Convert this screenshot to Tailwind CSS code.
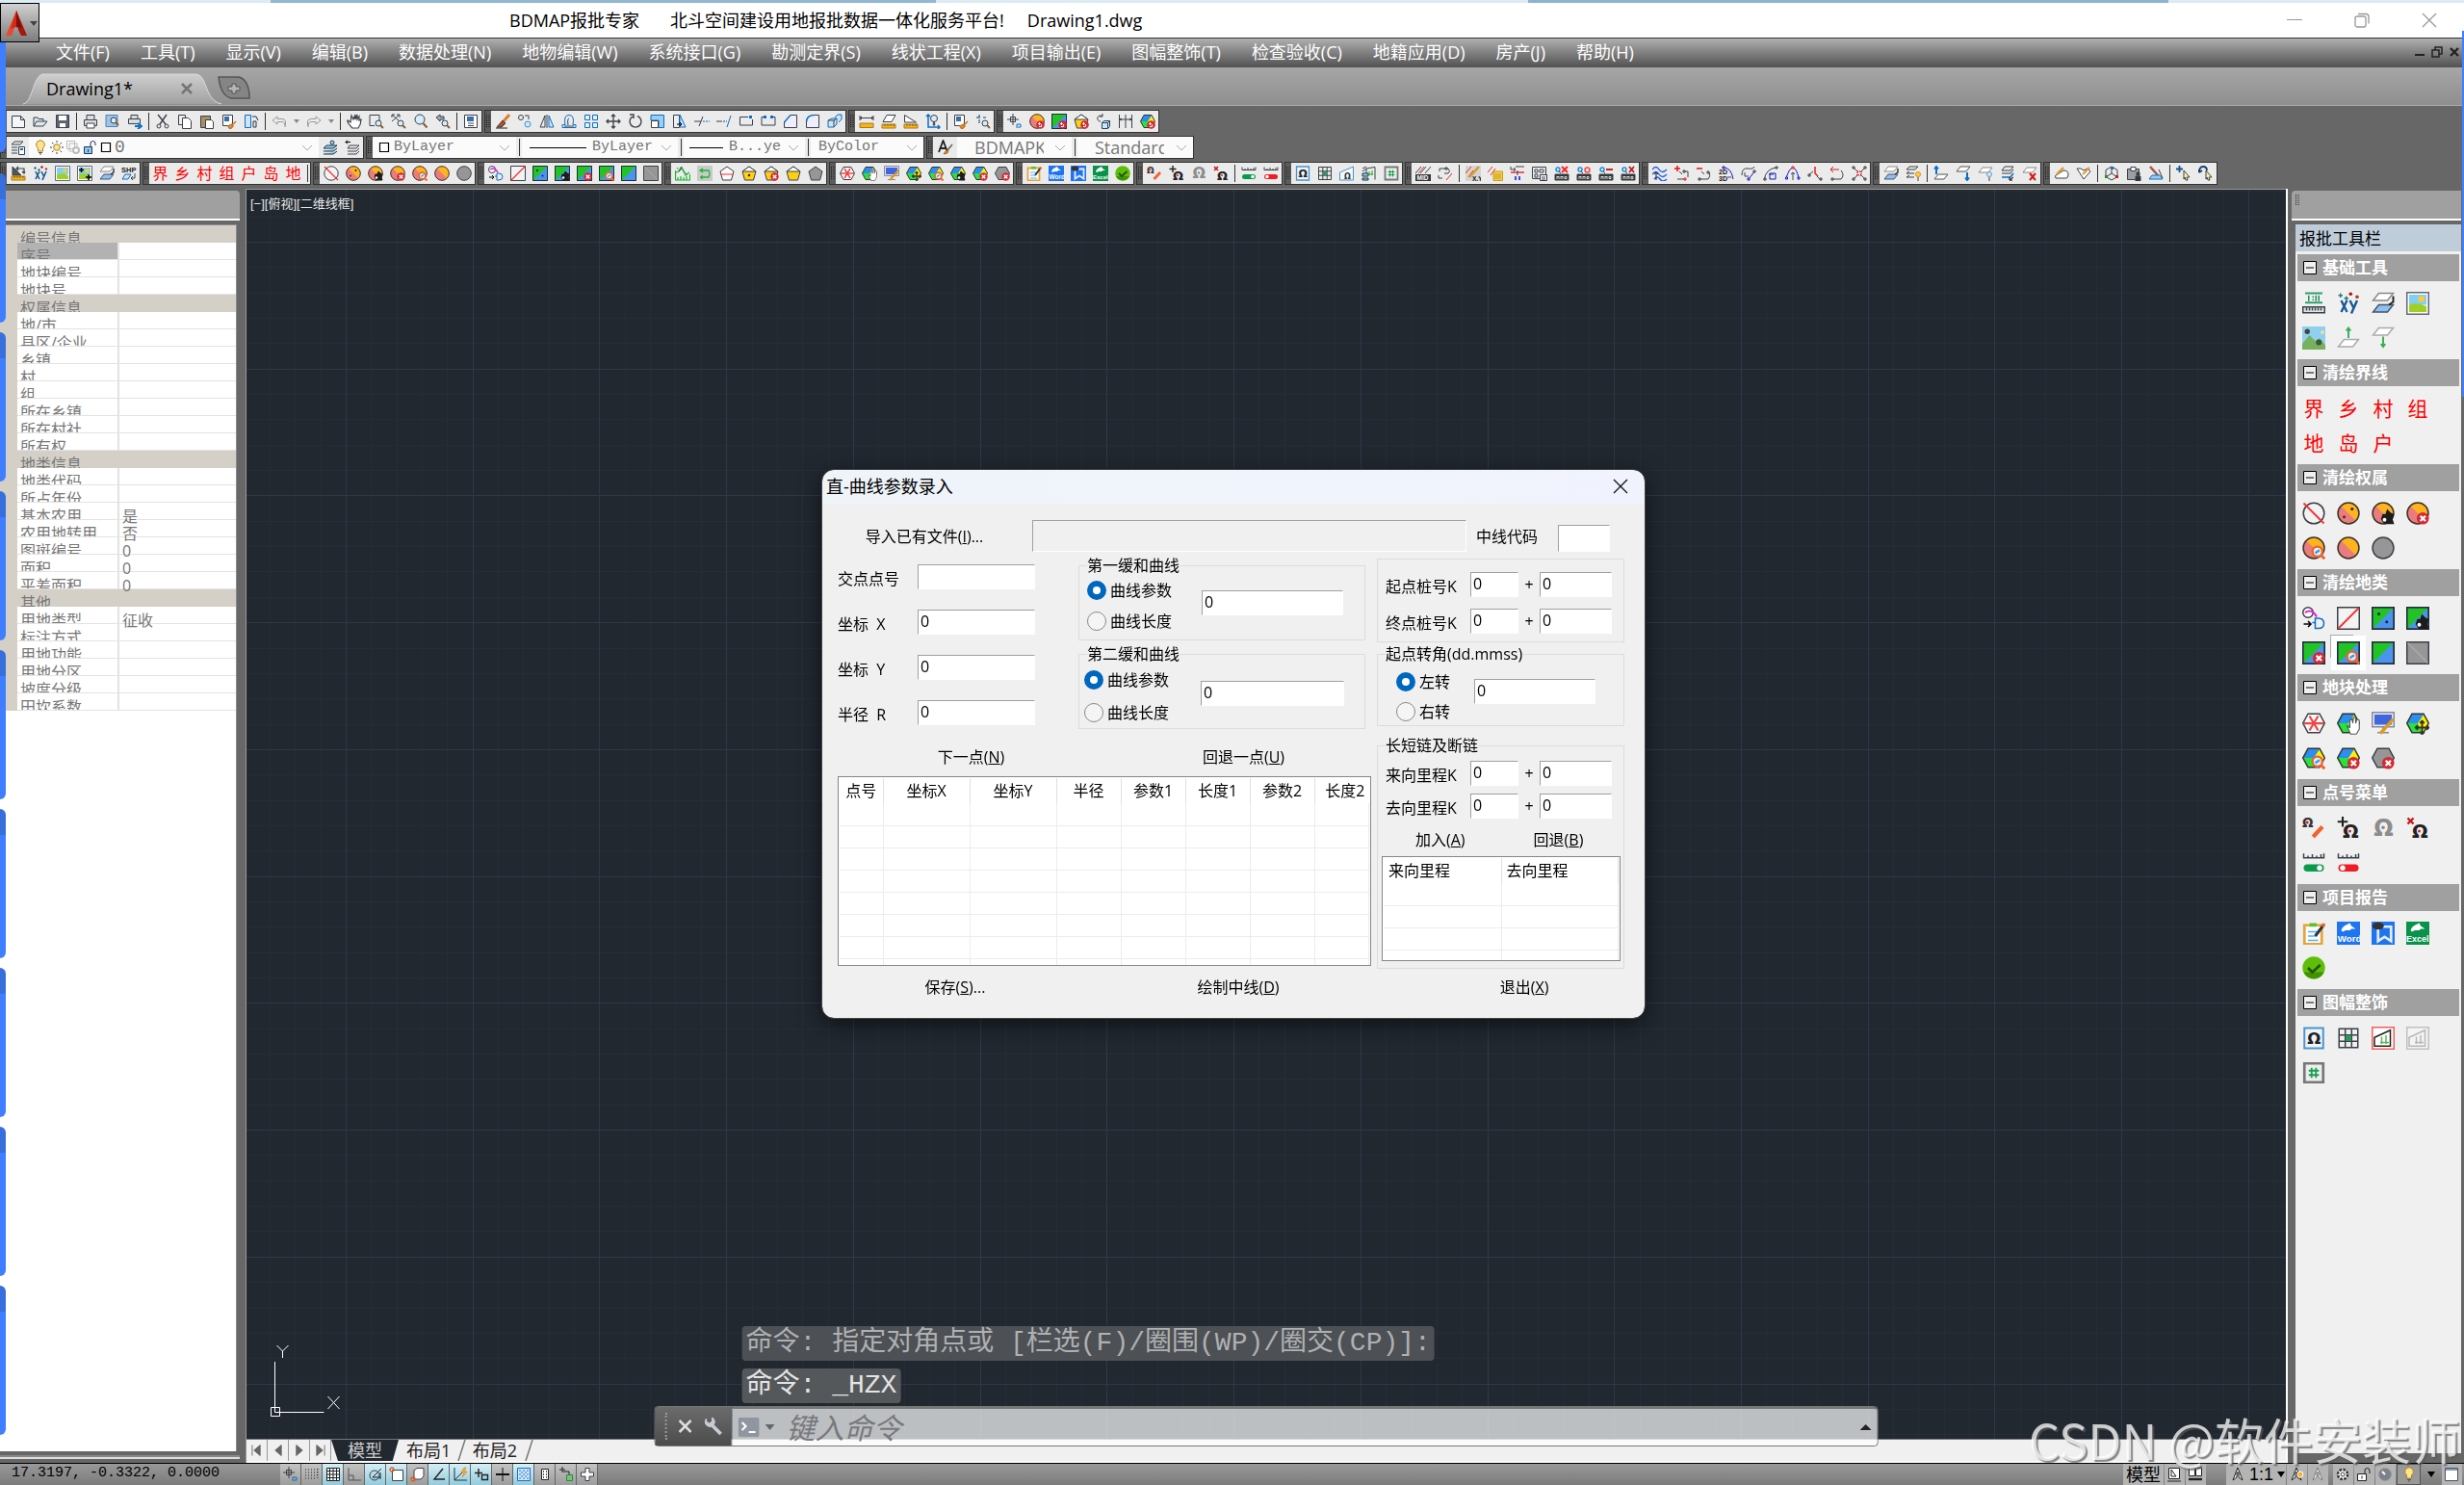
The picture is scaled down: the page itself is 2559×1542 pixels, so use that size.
<!DOCTYPE html>
<html lang="zh-CN">
  <head>
    <meta charset="UTF-8" />
    <meta name="viewport" content="width=device-width, initial-scale=1.0" />
    <title>BDMAP报批专家</title>
    <script src="https://cdn.jsdelivr.net/npm/@tailwindcss/browser@4"></script>
  </head>
  <body class="flex h-screen flex-col overflow-hidden bg-[#676767] font-['Open_Sans','Noto_Sans_CJK_SC',sans-serif] text-black">
    <!-- desktop strip above the window -->
    <div class="flex h-[3px] shrink-0 bg-[#dcebf4]">
      <div class="w-[11%]"></div>
      <div class="w-[27%] bg-[#93b7d2]"></div>
      <div class="w-[24%]"></div>
      <div class="w-[26%] bg-[#8fb3cf]"></div>
    </div>

    <!-- title bar -->
    <header class="flex h-[37px] shrink-0 items-center border-b border-[#333] bg-white pr-7 pl-[529px] text-lg">
      <h1 class="flex flex-1 gap-8 leading-6"><span>BDMAP报批专家</span><span>北斗空间建设用地报批数据一体化服务平台!</span><span class="-ml-2">Drawing1.dwg</span></h1>
      <div class="flex gap-[54px]">
        <button aria-label="最小化"><svg class="size-4" viewBox="0 0 16 16" fill="none" stroke="#999"><path d="M0 7.500h16" /></svg></button>
        <button aria-label="还原"><svg class="size-4" viewBox="0 0 16 16" fill="none" stroke="#999" stroke-width="1.300"><rect x="1" y="4" width="11" height="11" rx="2" /><path d="M4 1.500h8q3 0 3 3v7" /></svg></button>
        <button aria-label="关闭"><svg class="size-4" viewBox="0 0 16 16" fill="none" stroke="#999" stroke-width="1.300"><path d="M1 1l14 14M15 1L1 15" /></svg></button>
      </div>
    </header>
    <button aria-label="应用程序菜单" class="absolute top-[3px] left-0 z-10 flex h-[41px] w-[41px] items-center border border-black bg-linear-to-b from-[#d2d2d2] to-[#7d7d7d] pl-1">
      <svg class="h-7 w-6" viewBox="0 0 24 28"><path d="M12 1L1 27h6l2-5z" fill="#e8492f" /><path d="M12 1l11 26h-6l-3-6z" fill="#a8160c" /><path d="M12 1L6 20l6-2 6 2z" fill="#d32a18" /><path d="M12 1v17l6 2z" fill="#7d0f08" /></svg>
      <svg class="ml-0.5 h-2 w-2" viewBox="0 0 8 8"><path d="M0 2h8L4 7z" fill="#3c434c" /></svg>
    </button>

    <!-- menu bar -->
    <nav class="flex h-[30px] shrink-0 items-center bg-linear-to-b from-[#b0b0b0] to-[#525252] pr-1 pb-0.5 pl-[58px] text-lg text-white">
      <div id="menu" class="flex flex-1 gap-8"></div>
      <div class="flex gap-1.5">
        <button aria-label="最小化图形"><svg class="h-3 w-3" viewBox="0 0 12 12" fill="none" stroke="#222" stroke-width="2"><path d="M1 9h10" /></svg></button>
        <button aria-label="还原图形"><svg class="h-3 w-3" viewBox="0 0 12 12" fill="none" stroke="#222" stroke-width="1.500"><path d="M1 4h7v7H1zM4 4V1h7v7H8" /></svg></button>
        <button aria-label="关闭图形"><svg class="h-3 w-3" viewBox="0 0 12 12" fill="none" stroke="#222" stroke-width="2.400"><path d="M2 2l8 8M10 2l-8 8" /></svg></button>
      </div>
    </nav>

    <!-- drawing tabs -->
    <div class="flex h-10 shrink-0 items-end border-b border-[#aaa] bg-linear-to-b from-[#a6a6a6] to-[#8f8f8f] pl-6">
      <div class="relative flex h-[33px] w-[206px] items-center pr-[30px] pb-0.5 pl-6">
        <svg class="absolute inset-0 h-full w-full" viewBox="0 0 206 33" preserveAspectRatio="none">
          <defs><linearGradient id="tab" x1="0" y1="0" x2="0" y2="1"><stop offset="0" stop-color="#cfcfcf" /><stop offset="1" stop-color="#a0a0a0" /></linearGradient></defs>
          <path d="M0 32C10 30 10 4 20 1H180C192 3 188 28 206 32" fill="url(#tab)" stroke="#dadada" />
        </svg>
        <span class="relative flex-1 text-lg leading-6">Drawing1*</span>
        <button aria-label="关闭标签" class="relative"><svg class="size-3" viewBox="0 0 12 12" stroke="#747474" stroke-width="2.500"><path d="M1 1l10 10M11 1L1 11" /></svg></button>
      </div>
      <button aria-label="新建标签" class="-ml-1 pb-1.5"><svg class="h-6 w-[34px]" viewBox="0 0 34 24"><path d="M1 1H22Q33 4 33 23H14Q3 20 1 1z" fill="#858585" stroke="#555" stroke-width="1.500" /><path d="M15 8h4v3h4v4h-4v3h-4v-3h-4v-4h4z" fill="#b5b5b5" stroke="#555" /></svg></button>
    </div>

    <!-- toolbars -->
    <div class="flex h-[86px] shrink-0 flex-col gap-[3px] pt-1">
      <div data-row="0" class="flex h-6 gap-0.5"></div>
      <div class="flex h-6 gap-0.5">
        <div class="flex h-6 w-[378px] items-center border border-[#333] bg-[#ebebeb]">
          <i data-grip></i>
          <button data-icon="layerProps" class="flex w-[23px] justify-center" aria-label="图层特性"></button>
          <div class="relative flex h-full flex-1 items-center gap-px bg-[#fbfbfb] pl-1 text-[#777]">
            <i data-icon="bulb"></i><i data-icon="sun"></i><i data-icon="freeze"></i><i data-icon="lock"></i><i data-icon="box"></i>
            <select aria-label="图层" class="h-full flex-1 appearance-none bg-transparent font-['Liberation_Mono',monospace] text-lg leading-5 outline-none"><option>0</option></select>
            <i data-chev></i>
          </div>
          <button data-icon="layerCur" class="flex w-[23px] justify-center" aria-label="置为当前"></button>
          <button data-icon="layerPrev" class="flex w-[23px] justify-center" aria-label="上一个图层"></button>
        </div>
        <div class="flex h-6 w-[580px] items-center border border-[#333] bg-[#ebebeb] font-['Liberation_Mono',monospace] text-[15px] text-[#777]">
          <i data-grip></i>
          <div class="relative flex h-full w-[149px] items-center gap-0.5 bg-[#fbfbfb] pl-1">
            <i data-icon="box"></i>
            <select aria-label="颜色" class="h-full flex-1 appearance-none bg-transparent outline-none"><option>ByLayer</option></select><i data-chev></i>
          </div>
          <i data-sep></i>
          <div class="relative flex h-full w-[162px] items-center gap-1.5 bg-[#fbfbfb] pl-2">
            <span class="h-px w-[59px] bg-black"></span>
            <select aria-label="线型" class="h-full flex-1 appearance-none bg-transparent outline-none"><option>ByLayer</option></select><i data-chev></i>
          </div>
          <i data-sep></i>
          <div class="relative flex h-full w-[126px] items-center gap-1.5 bg-[#fbfbfb] pl-1.5">
            <span class="h-px w-[35px] bg-black"></span>
            <select aria-label="线宽" class="h-full flex-1 appearance-none bg-transparent outline-none"><option>B...ye</option></select><i data-chev></i>
          </div>
          <i data-sep></i>
          <div class="relative flex h-full flex-1 items-center bg-[#fbfbfb] pl-2">
            <select aria-label="打印样式" class="h-full flex-1 appearance-none bg-transparent outline-none"><option>ByColor</option></select><i data-chev></i>
          </div>
        </div>
        <div class="flex h-6 w-[278px] items-center border border-[#333] bg-[#ebebeb] text-lg text-[#777]">
          <i data-grip></i>
          <button data-icon="textStyle" class="flex w-[25px] justify-center" aria-label="文字样式"></button>
          <div class="relative flex h-full w-[119px] items-center bg-[#fbfbfb] pl-[18px]">
            <select aria-label="字体样式" class="h-full w-[72px] appearance-none overflow-hidden bg-transparent leading-5 outline-none"><option>BDMAPK</option></select><i data-chev></i>
          </div>
          <i data-sep></i>
          <div class="relative flex h-full flex-1 items-center bg-[#fbfbfb] pl-[18px]">
            <select aria-label="标注样式" class="h-full w-[72px] appearance-none overflow-hidden bg-transparent leading-5 outline-none"><option>Standard</option></select><i data-chev></i>
          </div>
        </div>
      </div>
      <div data-row="1" class="flex h-6 gap-0.5"></div>
    </div>

    <main class="flex min-h-0 flex-1">
      <!-- property palette -->
      <aside class="flex w-[255px] shrink-0 flex-col pt-0.5 pr-1.5">
        <div class="h-[31px] rounded-tr border-b-2 border-white bg-[#a0a0a0]"></div>
        <div class="mt-1 mr-[3px] flex min-h-0 flex-1 flex-col border-t border-r border-[#8a8a92] bg-white">
          <table class="w-full table-fixed border-collapse bg-white text-base leading-4 text-[#777]">
            <colgroup><col class="w-[18px]" /><col class="w-[105px]" /><col /></colgroup>
            <tbody id="props"></tbody>
          </table>
        </div>
        <div class="mt-1 mb-1 h-1 border-b-2 border-[#ddd] bg-[#888]"></div>
      </aside>

      <!-- drawing area -->
      <section class="relative flex min-w-0 flex-1 flex-col border-r-2 border-l border-white border-l-[#999] bg-[#f0f0f0]">
        <div id="canvas" class="relative min-h-0 flex-1 overflow-hidden border-t border-[#999] bg-[#212830]">
          <svg id="grid" class="absolute inset-0 h-full w-full"></svg>
          <p class="relative pt-1.5 pl-1 font-['Liberation_Sans','Noto_Sans_CJK_SC',sans-serif] text-[13px] leading-[18px] text-[#e8e8e8]">[−][俯视][二维线框]</p>
          <svg class="absolute bottom-[18px] left-[23px] h-[80px] w-[80px]" viewBox="0 0 80 80" fill="none" stroke="#fff">
            <path d="M6.500 3v52.500h51M2.500 50.500h9v9h-9z" transform="translate(0 15)" /><path d="M8.500 1l6 6 6-6M14.500 7v7" /><path d="M61.500 54l12 13M73.500 54l-12 13" />
          </svg>
        </div>
        <!-- layout tabs -->
        <div class="flex h-[23px] shrink-0 items-stretch border-t border-[#777] text-lg leading-[22px] text-[#222]">
          <div id="pager" class="flex"></div>
          <button class="w-[70px] bg-[#212830] text-[#ccc] [clip-path:polygon(0_0,100%_0,91%_100%,10%_100%)]">模型</button>
          <button class="w-[60px] pl-2 text-left">布局1</button>
          <svg class="h-full w-2.5" viewBox="0 0 10 22" stroke="#777" stroke-width="1.500"><path d="M9 0L2 22" /></svg>
          <button class="w-[60px] text-center">布局2</button>
          <svg class="h-full w-2.5" viewBox="0 0 10 22" stroke="#777" stroke-width="1.500"><path d="M9 0L2 22" /></svg>
        </div>
        <div class="h-0.5 shrink-0 bg-[#fafafa]"></div>

        <!-- command line -->
        <div class="absolute bottom-[17px] left-1/2 flex w-[60%] -translate-x-1/2 flex-col gap-[3px]">
          <div class="flex flex-col items-start gap-2 pl-[91px] font-['Liberation_Mono','Noto_Sans_CJK_SC',monospace] text-[28px] leading-9">
            <p class="rounded-sm bg-[#4d5054] px-1 text-[#aeb0b2]">命令: 指定对角点或 [栏选(F)/圈围(WP)/圈交(CP)]:</p>
            <p class="rounded-sm bg-[#55585b] px-1 text-[#e4e4e4]">命令: _HZX</p>
          </div>
          <div class="flex h-[42px] rounded border border-[#777]">
            <div class="flex w-20 items-center gap-3 border-r border-[#888] bg-linear-to-b from-[#6c6c6c] to-[#4c4c4c] pl-2.5">
              <span class="h-7 border-l-2 border-dotted border-[#999]"></span>
              <button aria-label="关闭命令行"><svg class="h-3.5 w-3.5" viewBox="0 0 14 14" stroke="#ddd" stroke-width="2.500"><path d="M1 1l12 12M13 1L1 13" /></svg></button>
              <button aria-label="自定义"><svg class="size-5" viewBox="0 0 20 20" fill="none" stroke="#c8ccd4"><path d="M9 9l9 9" stroke-width="3.600" /><path d="M3 2a5 5 0 1 0 6-1v4l-3 2-3-2z" fill="#c8ccd4" /></svg></button>
            </div>
            <div class="flex flex-1 items-center rounded-r border-t-2 border-[#777] bg-white/70 pr-1.5 pl-1.5">
              <svg class="h-5 w-[22px]" viewBox="0 0 22 20"><rect width="22" height="20" rx="2" fill="#8f969f" /><path d="M4 5l4 4-4 4M11 15h7" fill="none" stroke="#fff" stroke-width="2" /></svg>
              <svg class="mx-1.5 h-2 w-2.5" viewBox="0 0 10 8"><path d="M0 1h10L5 7z" fill="#666" /></svg>
              <input aria-label="命令" placeholder="键入命令" class="h-full min-w-0 flex-1 bg-transparent pl-1.5 text-[30px] italic outline-none placeholder:text-[#77797c]" />
              <svg class="h-1.5 w-3" viewBox="0 0 12 6"><path d="M0 6h12L6 0z" fill="#222" /></svg>
            </div>
          </div>
        </div>
      </section>

      <!-- approval tool palette -->
      <aside class="flex w-[183px] shrink-0 flex-col pt-0.5 pr-[3px] pb-2.5 pl-1">
        <div class="h-[31px] rounded-tl border-b-2 border-white bg-[#a0a0a0] pt-1 pl-1"><i data-dots></i></div>
        <div class="mt-1 ml-1 flex-1 bg-[#f0f0f0]">
          <h2 class="mb-[3px] h-7 bg-[#bfcddb] pt-px pl-1 text-[17px] leading-7">报批工具栏</h2>
          <div id="palette" class="px-0.5"></div>
        </div>
      </aside>
    </main>

    <!-- status bar -->
    <footer class="flex h-[23px] shrink-0 border-t border-black bg-linear-to-b from-[#999] to-[#7b7b7b]">
      <p class="w-[291px] pl-3 font-['Liberation_Mono',monospace] text-[15px] leading-5 whitespace-pre">17.3197, -0.3322, 0.0000</p>
      <div id="modes" class="flex flex-1"></div>
      <div class="flex gap-px text-lg leading-5">
        <button class="bg-[#b4b4b4] px-[3px]">模型</button>
        <button data-icon="paper" class="w-[21px] bg-[#b4b4b4] pl-0.5" aria-label="快速查看布局"></button>
        <button data-icon="views" class="mr-5 w-[21px] bg-[#b4b4b4] pl-0.5" aria-label="快速查看图形"></button>
        <button class="flex w-[62px] items-center gap-1 bg-[#b4b4b4] pl-1 font-['Liberation_Sans',sans-serif]"><i data-icon="anno"></i>1:1<svg class="h-1.5 w-2" viewBox="0 0 8 6"><path d="M0 0h8L4 6z" /></svg></button>
        <button data-icon="annoSun" class="w-[21px] bg-[#b4b4b4] pl-0.5" aria-label="注释可见性"></button>
        <button data-icon="annoGray" class="mr-1 w-[21px] bg-[#b4b4b4] pl-0.5" aria-label="自动缩放"></button>
        <button data-icon="gear" class="w-[21px] bg-[#b4b4b4] pl-0.5" aria-label="工作空间"></button>
        <button data-icon="lockOpen" class="w-[21px] bg-[#b4b4b4] pl-0.5" aria-label="锁定"></button>
        <button data-icon="gauge" class="w-[21px] bg-[#b4b4b4] pl-0.5" aria-label="硬件加速"></button>
        <button data-icon="bulb" class="w-[25px] border border-[#555] bg-[#999] pl-1" aria-label="隔离对象"></button>
        <svg class="mx-1.5 mt-2 h-1.5 w-2" viewBox="0 0 8 6"><path d="M0 0h8L4 6z" /></svg>
        <button data-icon="screen" class="mr-0.5 w-[21px] bg-[#b4b4b4] pl-0.5" aria-label="全屏显示"></button>
      </div>
    </footer>

    <!-- window peeking out on both sides -->
    <div class="pointer-events-none absolute top-[3px] left-0 flex h-[1490px] w-1.5 flex-col overflow-hidden" id="edge"></div>
    <div class="pointer-events-none absolute top-8 right-0 h-[380px] w-0.5 bg-[#3f7fff]"></div>

    <!-- curve parameter dialog -->
    <div class="pointer-events-none fixed inset-0 grid place-items-center pt-[3px] pl-[3px]">
      <form role="dialog" aria-label="直-曲线参数录入" onsubmit="return false" class="pointer-events-auto flex w-[854px] flex-col overflow-hidden rounded-xl bg-[#f0f0f0] pb-[22px] text-base leading-5 shadow-[0_6px_24px_rgba(0,0,0,0.6)] outline outline-[#444]">
        <div class="flex h-[35px] items-center justify-between bg-linear-to-r from-[#eff4f9] to-[#f0f3fd] pr-[17px] pb-0.5 pl-1 text-lg">
          <h2>直-曲线参数录入</h2>
          <button aria-label="关闭"><svg class="size-4" viewBox="0 0 16 16" fill="none" stroke="#111" stroke-width="1.300"><path d="M1 1l14 14M15 1L1 15" /></svg></button>
        </div>
        <div class="flex h-[50px] items-end pr-9 pl-4">
          <button class="mr-[22px] mb-1.5 w-[180px]">导入已有文件(<u>I</u>)...</button>
          <input aria-label="文件路径" class="h-[33px] min-w-0 flex-1 border border-white border-t-[#a0a0a0] border-l-[#a0a0a0] px-1 outline-none" />
          <label for="code" class="mb-1.5 ml-2.5">中线代码</label>
          <input id="code" class="ml-[21px] h-7 w-[54px] border border-white border-t-[#a0a0a0] border-l-[#a0a0a0] bg-white px-1 outline-none" />
        </div>
        <div class="mt-1 flex gap-1.5 pr-[21px] pl-4">
          <div class="w-[554px]">
            <div class="flex gap-[45px]">
              <div id="coords" class="flex w-[205px] flex-col gap-[21px] pt-[9px]"></div>
              <div class="flex w-[298px] flex-col gap-1">
                <fieldset class="flex h-[88px] border border-[#dcdcdc] pl-2">
                  <legend>第一缓和曲线</legend>
                  <div class="flex w-[119px] flex-col gap-3 pt-1.5">
                    <label class="flex items-center gap-1"><input type="radio" name="c1" checked class="size-5 appearance-none rounded-full border border-[#888] bg-[#f5f5f5] checked:border-[6px] checked:border-[#0067c0] checked:bg-white" />曲线参数</label>
                    <label class="flex items-center gap-1"><input type="radio" name="c1" class="size-5 appearance-none rounded-full border border-[#888] bg-[#f5f5f5] checked:border-[6px] checked:border-[#0067c0] checked:bg-white" />曲线长度</label>
                  </div>
                  <input aria-label="第一缓和曲线值" value="0" class="mt-4 h-[26px] w-[147px] border border-white border-t-[#a0a0a0] border-l-[#a0a0a0] bg-white px-0.5 pb-0.5 outline-none" />
                </fieldset>
                <fieldset class="flex h-[88px] border border-[#dcdcdc] pl-[5px]">
                  <legend class="ml-[3px]">第二缓和曲线</legend>
                  <div class="flex w-[121px] flex-col gap-3.5 pt-[7px]">
                    <label class="flex items-center gap-1"><input type="radio" name="c2" checked class="size-5 appearance-none rounded-full border border-[#888] bg-[#f5f5f5] checked:border-[6px] checked:border-[#0067c0] checked:bg-white" />曲线参数</label>
                    <label class="flex items-center gap-1"><input type="radio" name="c2" class="size-5 appearance-none rounded-full border border-[#888] bg-[#f5f5f5] checked:border-[6px] checked:border-[#0067c0] checked:bg-white" />曲线长度</label>
                  </div>
                  <input aria-label="第二缓和曲线值" value="0" class="mt-[18px] h-[26px] w-[149px] border border-white border-t-[#a0a0a0] border-l-[#a0a0a0] bg-white px-0.5 pb-0.5 outline-none" />
                </fieldset>
              </div>
            </div>
            <div class="mt-[19px] mb-2.5 grid grid-cols-2">
              <button>下一点(<u>N</u>)</button>
              <button class="pl-3">回退一点(<u>U</u>)</button>
            </div>
            <div class="h-[197px] overflow-hidden border border-[#828790] bg-white p-px">
              <table class="w-full table-fixed border-collapse" id="points"></table>
            </div>
          </div>
          <div class="flex-1 pt-[3px]">
            <div id="stakes" class="flex h-[87px] flex-col gap-3 border border-[#dcdcdc] pt-[13px] pl-2"></div>
            <fieldset class="mt-0.5 flex h-[85px] border border-[#dcdcdc] pl-2">
              <legend>起点转角(dd.mmss)</legend>
              <div class="flex w-[92px] flex-col gap-[11px] pt-[9px] pl-[11px]">
                <label class="flex items-center gap-1"><input type="radio" name="turn" checked class="size-5 appearance-none rounded-full border border-[#888] bg-[#f5f5f5] checked:border-[6px] checked:border-[#0067c0] checked:bg-white" />左转</label>
                <label class="flex items-center gap-1"><input type="radio" name="turn" class="size-5 appearance-none rounded-full border border-[#888] bg-[#f5f5f5] checked:border-[6px] checked:border-[#0067c0] checked:bg-white" />右转</label>
              </div>
              <input aria-label="起点转角" value="0" class="mt-4 h-[26px] w-[126px] border border-white border-t-[#a0a0a0] border-l-[#a0a0a0] bg-white px-0.5 pb-0.5 outline-none" />
            </fieldset>
            <fieldset class="mt-2.5 h-[242px] border border-[#dcdcdc]">
              <legend class="ml-2">长短链及断链</legend>
              <div id="chains" class="flex flex-col gap-2 pt-1.5 pl-2"></div>
              <div class="mt-3 mb-[7px] flex gap-[71px] pl-[39px]">
                <button>加入(<u>A</u>)</button>
                <button>回退(<u>B</u>)</button>
              </div>
              <div class="mr-[3px] ml-1 h-[109px] overflow-hidden border border-[#828790] bg-white p-px">
                <table class="w-full table-fixed border-collapse" id="miles"></table>
              </div>
            </fieldset>
          </div>
        </div>
        <div class="mt-[9px] grid grid-cols-[276px_312px_1fr]">
          <button>保存(<u>S</u>)...</button>
          <button>绘制中线(<u>D</u>)</button>
          <button class="pl-4">退出(<u>X</u>)</button>
        </div>
      </form>
    </div>

    <p class="pointer-events-none absolute right-1 bottom-[18px] text-[51px] leading-[60px] whitespace-nowrap text-white/75 font-['Noto_Sans_CJK_SC',sans-serif] [text-shadow:2px_2px_1px_rgba(90,90,90,0.7)]">CSDN @软件安装师</p>

    <script>
      // ---- icon parts, all on a 16 x 16 grid ----
      const badX = '<circle cx="11.500" cy="11.500" r="4.200" fill="#d42a36" stroke="none"/><path d="M9.800 9.800l3.500 3.500M13.300 9.800l-3.500 3.500" stroke="#fff" stroke-width="1.500"/>';
      const badMag = '<circle cx="10.500" cy="10.500" r="3.400" fill="#dff1ff" stroke="#f2622a" stroke-width="1.600"/><path d="M9 11.500l3-2" stroke="#2a9fe0" stroke-width="1.500"/><path d="M13 13l2.500 2.500" stroke="#f2622a" stroke-width="2"/>';
      const badHand = '<path d="M7 12l1-3 2 0 1-3 2 2 2 1-1 3 1 3H9z" fill="#1c1c1c" stroke="#1c1c1c"/><circle cx="9" cy="12.500" r="1.300" fill="#fff" stroke="none"/>';
      const badUndo = '<circle cx="11.500" cy="11.500" r="4.300" fill="#d42a36" stroke="none"/><path d="M10 13.500h2.500q1-2-1-3H9.500l1.500-1.500M9.500 10.500l1.500 1.500" stroke="#fff"/>';
      const circ = '<circle cx="8" cy="8" r="7.300" fill="#ffb41f" stroke="none"/><path d="M2.800 2.800A7.300 7.300 0 0 0 13.200 13.200z" fill="#e97d7d" stroke="none"/><circle cx="8" cy="8" r="7.300" stroke="#3a3226"/>';
      const sq = '<path d="M.5 .5h15v15H.5z" fill="#4a94ee"/><path d="M1 1h14L1 15z" fill="#22c425" stroke="none"/><path d="M.5 .5h15v15H.5z" stroke="#222b3a"/>';
      const hexPath = 'M4 1.500h8l3.500 6.500-3.500 6.500H4L.5 8z';
      const hex = '<path d="' + hexPath + '" fill="#fff200" stroke="none"/><path d="M4 2h8L8 8H.5z" fill="#2a8ff0" stroke="none"/><path d="M.5 8H8l3 6H4z" fill="#29e23a" stroke="none"/><path d="' + hexPath + '" stroke="#333"/>';
      const pentPath = 'M8 1l7 5-2.500 9h-9L1 6z';
      const pent = '<path d="' + pentPath + '" fill="#ffd012"/><path d="M8 1l7 5H1z" fill="#fff" />';
      const omega = (x, y, size, c) => `<text x="${x}" y="${y}" font-size="${size}" font-weight="bold" fill="${c}" stroke="none" font-family="DejaVu Sans">Ω</text>`;
      const redDot = (x, y) => `<circle cx="${x}" cy="${y}" r="1" fill="#d22" stroke="none"/>`;
      const sheet = (y, f, s) => `<path d="M5 ${y}h10l-4 5H1z" fill="${f}" stroke="${s}"/>`;
      const mag = (x, y) => `<circle cx="${x}" cy="${y}" r="3" fill="#d5ecfb"/><path d="M${x + 2} ${y + 2}l3 3" stroke="#8a5a2b" stroke-width="1.800"/>`;
      const ruler = '<path d="M1 11h14v4H1z" fill="#f6b51c" stroke="#b07a10"/><path d="M4 11v2M7 11v2M10 11v2M13 11v2" stroke="#7a5208"/>';
      const sunpic = '<path d="M.5 .5h15v15H.5z" fill="#fff" stroke="#667"/><path d="M2 2h12v7H2z" fill="#7fd0f2" stroke="none"/><path d="M2 9q6-2 12 1v4H2z" fill="#a0d022" stroke="none"/><circle cx="10.500" cy="5" r="2.200" fill="#ffc83a" stroke="none"/>';
      const mmo = (extra) => '<path d="M1 9h14v6H1z" fill="#333"/><path d="M3 14v-3l1 1 1-1v3M7 14v-3l1 1 1-1v3M11 11.500h2v2h-2z" stroke="#fff" stroke-width=".8"/><circle cx="4" cy="4" r="2" stroke="#1a8fd8" stroke-width="1.500"/><path d="M5 6l2 2"/>' + extra;
      const node = (x, y, c = '#333') => `<path d="M${x - 1} ${y - 1}h2v2h-2z" fill="#fff" stroke="${c}"/>`;
      const aMark = (c) => `<path d="M8 1L3 14l4-3V6h2v5l4 3z" fill="#fff" stroke="${c}"/>`;

      const icons = {
        new: '<path d="M1.500 2.500h9l4 4v8h-13zM10.500 2.500v4h4" fill="#f4f6f8"/>',
        open: '<path d="M1 13V4h4l1 1.500h5V8M1 13l3-5h11l-4 5z" fill="#dfe7ee"/>',
        save: '<path d="M1.500 1.500h13v13h-13z" fill="#5b6673"/><path d="M4 2h8v5H4zM5 10h6v4H5z" fill="#fff" stroke="none"/>',
        print: '<path d="M4 6V1.500h8V6M1.500 6.500h13v6h-13z" fill="#d9dde0"/><path d="M4 10h8v5H4z" fill="#fff"/>',
        preview: '<path d="M1 1.500h12v12H1z" fill="#9bc4e6" stroke="#4d83b4"/>' + mag(9, 7),
        publish: '<path d="M4 5V1.500h7V5M1.500 5.500h12v5h-12z" fill="#d9dde0"/><path d="M8 13h5M11 10l4 3-4 3" stroke="#0b6fc4" stroke-width="2"/>',
        cut: '<path d="M3 1l8 10M12 1L5 11" stroke-width="1.400"/><circle cx="4" cy="13" r="2"/><circle cx="12" cy="13" r="2"/>',
        copy: '<path d="M1.500 1.500h7v10h-7z" fill="#eee"/><path d="M5.500 4.500h6l3 3v8h-9z" fill="#fff"/>',
        paste: '<path d="M1.500 2.500h10v12h-10z" fill="#a88f64"/><path d="M6.500 6.500h6l2 2v7h-8z" fill="#fff"/>',
        match: '<path d="M1.500 1.500h10v11h-10z" fill="#fff"/><path d="M3 3h5v5H3z" fill="#3b6ea8" stroke="none"/><path d="M15 8l-4 4M7 13l4-2 1 2-3 3z" stroke="#c0762a" fill="#e79a3c" stroke-width="1.500"/>',
        blocked: '<path d="M1.500 1.500h6v13h-6z" fill="#cfe3f5" stroke="#0b6fc4"/><path d="M9 3h4l2 4M10 8h3v6h-3z" stroke="#234"/>',
        undo: '<path d="M6 3L1 7l5 4V8.500h5q3 0 3 5 2-8-3-8H6z" fill="#eee" stroke="#999"/>',
        redo: '<path d="M10 3l5 4-5 4V8.500H5q-3 0-3 5-2-8 3-8h5z" fill="#eee" stroke="#999"/>',
        pan: '<path d="M4 9L1 7q-1 2 5 8h6q3-4 3-9l-2 1V3l-2 3V1L9 6V1L7 6 5 2z" fill="#fff" stroke-width="1.200"/>',
        zoomWin: '<path d="M1 1.500h10v7M1 1.500v11h5"/>' + mag(10, 10),
        zoomExt: '<path d="M1 1l8 7M9 1L1 8M1 4V1h3M9 4V1H6"/>' + mag(10, 10),
        zoom: '<circle cx="7" cy="6" r="5" fill="#d5ecfb"/><path d="M10.500 10l4 4.500" stroke="#8a5a2b" stroke-width="2"/>',
        zoomPrev: '<path d="M1 4l4-3v2h4v3H5v2z" fill="#9ab"/>' + mag(10, 10),
        props: '<path d="M1.500 1.500h13v13h-13z" fill="#fff"/><path d="M4 3h7v5H4z" fill="#3b6ea8" stroke="none"/><path d="M5 10h6M5 12.500h6"/>',
        erase: '<path d="M15 1L8 9" stroke="#d8832c" stroke-width="3"/><path d="M8 7l3 3-4 4H2z" fill="#b84a20"/><path d="M1 15h12" stroke="#222"/>',
        copyObj: '<circle cx="4" cy="4" r="2.500"/><circle cx="11" cy="11" r="3" stroke="#3a94d8" fill="#cfe8fb"/><path d="M8 2h4v4"/>',
        mirror: '<path d="M6 2v12H1z"/><path d="M10 2v12h5z" stroke="#0b6fc4" fill="#cfe3f5"/><path d="M8 1v14"/>',
        offset: '<path d="M1 14.500h14v-3H12q2-10-4-10t-4 10H1z" stroke="#0b6fc4"/><path d="M3 13h10M8 5q-2 0-1 7"/>',
        array: '<path d="M1.500 1.500h5v5h-5zM9.500 1.500h5v5h-5zM1.500 9.500h5v5h-5zM9.500 9.500h5v5h-5z" stroke="#0b6fc4" fill="#e6f1fa"/>',
        move: '<path d="M8 1v14M1 8h14M6 3l2-2 2 2M6 13l2 2 2-2M3 6L1 8l2 2M13 6l2 2-2 2" stroke-width="1.300"/>',
        rotate: '<path d="M10 2.500a6 6 0 1 1-4 0M6 5V1H2" stroke-width="1.400"/>',
        scale: '<path d="M1 1.500h13.500v13H9V7H1z" stroke="#0b6fc4" fill="#9fcdef"/><path d="M1.500 7.500h7v7h-7z" fill="#fff"/>',
        stretch: '<path d="M1.500 1.500h6v13h-6z" fill="#eee"/><path d="M8 1l6 13H8z" stroke="#0b6fc4" fill="#cfe3f5"/><path d="M5 11h5M8 9l2 2-2 2" stroke="#000"/>',
        trim: '<path d="M0 8h7M9 3L5 13"/><path d="M9 8h7" stroke="#0b6fc4" stroke-dasharray="2 1"/>',
        extend: '<path d="M0 8h6" /><path d="M7 8h4" stroke-dasharray="2 1"/><path d="M15 2l-4 12" stroke="#0b6fc4"/>',
        brk1: '<path d="M14.500 6v6h-13V3.500H10"/><path d="M11 2h3v3h-3z" fill="#0b6fc4" stroke="none"/>',
        brk2: '<path d="M1 3.500h2M13 3.500h2V12H1V3.500"/><path d="M3 2h3v3H3zM10 2h3v3h-3z" fill="#0b6fc4" stroke="none"/>',
        chamfer: '<path d="M8 1.500h6.500v13h-13V8" fill="#eef"/><path d="M8 1.500L1.500 9" stroke="#0b6fc4" stroke-width="1.400"/>',
        fillet: '<path d="M9 1.500h5.500v13h-13V9" fill="#eef"/><path d="M9 1.500Q1.500 2 1.500 9" stroke="#0b6fc4" stroke-width="1.400"/>',
        explode: '<path d="M1 7l4-2h5v6l-3 3H1zM8 4l3-3h4v5l-3 3" stroke="#0b6fc4" fill="#cfe3f5"/><path d="M1 7h6v7M7 7l3-2"/>',
        dist: '<path d="M1 2v5M15 2v5M1 4.500h14M3 3L1 4.500 3 6M13 3l2 1.500L13 6"/><path d="M1 10h14v4.500H1z" fill="#f6b51c" stroke="#b07a10"/>',
        area: '<path d="M6 1.500h9l-4 7H2z" fill="#fff"/>' + ruler,
        slopeR: '<path d="M1.500 9V1.500l12 7.500z" fill="#fff"/>' + ruler,
        locate: '<path d="M3 1v13h12M1 3l2-2 2 2M13 12l2 2-2 2" stroke="#0b6fc4" stroke-width="1.500"/><circle cx="9" cy="5" r="3.500" fill="#d5ecfb"/><path d="M9 8l-1 4h2z"/>',
        quick: '<path d="M1 4h4M8 4h3M4 1v3M4 6v4" stroke="#146"/>' + mag(10, 10),
        snap: '<path d="M6 0v12M0 6h12M3.500 3.500h5v5h-5z"/><path d="M10 15v-4h4v3h-3" stroke="#0b6fc4"/>',
        circUndo: circ + badUndo, sqUndo: sq + badUndo, pentUndo: pent + badUndo, hexUndo: hex + badUndo,
        rotBox: '<path d="M7 3a3 3 0 1 0-2 5M7 0v3H4"/><path d="M6.500 9.500l2-2h6v6l-2 2h-6zM6.500 9.500h6v6M12.500 9.500l2-2" fill="#cfe3f5" stroke="#246"/>',
        dimLine: '<path d="M1.500 1v14M8 1v14M14.500 1v14M2 6h12M4 5L2 6l2 1M12 5l2 1-2 1"/>',

        layerProps: '<path d="M4 2h9l-3 3H1zM1 8h6M1 11h6M1 14h6"/><path d="M8.500 7.500h6v8h-6z" fill="#fff"/><path d="M10 9h3v2h-3z" fill="#0b6fc4" stroke="none"/>',
        bulb: '<path d="M8 .8a4.400 4.400 0 0 0-2.500 8V12h5V8.800A4.400 4.400 0 0 0 8 .8z" fill="#ffe48a" stroke="#a8862a"/><path d="M6 13.500h4M7 15h2" stroke="#555"/>',
        sun: '<circle cx="8" cy="8" r="3.300" fill="#ffe48a" stroke="#a8862a"/><path d="M8 1v2M8 13v2M1 8h2M13 8h2M3 3l1.500 1.500M11.500 11.500L13 13M13 3l-1.500 1.500M4.500 11.500L3 13"/>',
        freeze: '<path d="M1.500 1.500h8v8h-8zM4 4h8v3M4 4v8h3" stroke="#bbb"/><circle cx="11" cy="11" r="3" stroke="#bbb" stroke-width="2"/>',
        lock: '<path d="M2.500 7.500h8v7h-8z" fill="#8fc9ec" stroke="#235"/><path d="M9 7V4q0-2.500 2.500-2.500T14 4v2" stroke="#235"/><path d="M6.500 10v3" stroke="#235"/>',
        box: '<path d="M3.500 3.500h9v9h-9z" fill="#fff" stroke="#000" stroke-width="1.200"/>',
        layerCur: '<path d="M4 6h11l-4 3H1zM1 12h10l4-3M1 15h10l4-3" fill="#9fcdef" stroke="#134"/><circle cx="10" cy="3" r="2" fill="#9fcdef"/>',
        layerPrev: '<path d="M5 6h10l-3 3H3zM3 12h9l3-3M3 15h9l3-3"/><path d="M1 2.500h5M3 .5L1 2.500l2 2" stroke="#000"/>',
        textStyle: '<path d="M1 13L5.500 1 10 13M3 9h5" stroke="#222" stroke-width="1.800"/><path d="M15 5l-5 6" stroke="#666" stroke-width="1.600"/><path d="M8 12l3-1-1 3-4 1z" fill="#e08a2c" stroke="#b5651a"/>',

        north: '<path d="M2 1v9h9z" fill="#555"/><path d="M6 3h8v5M12 6l2 2 1-2M8 1L6 3l2 2" stroke-width="1.200"/>' + ruler,
        xy: '<path d="M3 6l4 8M7 6l-4 8M9 6l2.500 5M14 6l-4 9" stroke="#175a96" stroke-width="1.600"/><path d="M1 2.500h3M2.500 1v3M5 4.500h3M6.500 3v3" stroke="#2a7a7a"/><circle cx="9.500" cy="1.500" r="1.200" fill="#a11" stroke="none"/><circle cx="14" cy="3.500" r="1.200" fill="#b43a12" stroke="none"/>',
        pic: sunpic,
        picPlus: sunpic + '<path d="M2 4.500h5M4.500 2v5M9 12h6M12 9v6" stroke="#000" stroke-width="1.500"/>',
        layerSwap: sheet(1, '#fff', '#888') + sheet(9, '#8fc0f2', '#456') + '<path d="M15 3v4l-3 2" stroke="#222" stroke-width="1.300"/>',
        shp: '<text x="0" y="7" font-size="7.500" font-weight="bold" fill="#222" stroke="none" font-family="Liberation Sans">SHP</text>' + '<path d="M4 9h6l-3 5H1z" fill="#cfe3f5" stroke="#0b6fc4"/><path d="M14 8v5h-4M12 11l-2 2 2 2"/>',
        circSlash: '<circle cx="8" cy="8" r="7.200" fill="#f3f3f3"/><path d="M1 1l14 14" stroke="#f03030" stroke-width="1.200"/>',
        circDots: circ + '<circle cx="10.500" cy="5" r="1" fill="#222" stroke="none"/><circle cx="5" cy="10.500" r="1" fill="#622" stroke="none"/>',
        circHand: circ + badHand, circX: circ + badX, circMag: circ + badMag, circ,
        circGray: '<circle cx="8" cy="8" r="7.300" fill="#969696"/>',
        nodeD: '<circle cx="4" cy="4" r="3.500" fill="#fff"/><path d="M2 4q5-3 8 3" stroke="#e020e0" stroke-width="1.400"/><path d="M1 12h5M4 10l2 2-2 2" stroke="#000"/><path d="M9 8h2q4 0 4 3.500T11 15H9zM7 11h2" stroke="#0b6fc4"/>',
        sqSlash: '<path d="M.5 .5h15v15H.5z" fill="#f3f3f3"/><path d="M1 15L15 1" stroke="#f03030" stroke-width="1.200"/>',
        sqDots: sq + '<circle cx="5" cy="5" r="1" fill="#121" stroke="none"/><circle cx="10.500" cy="10.500" r="1" fill="#125" stroke="none"/>',
        sqHand: sq + badHand, sqX: sq + badX, sqMag: sq + badMag, sq,
        sqGray: '<path d="M.5 .5h15v15H.5z" fill="#969696"/><path d="M1 1l14 14" stroke="#aaa"/>',
        fence: '<path d="M.5 5v10h15V9M3 15v-3M6 15v-4M9 15v-3M12 15v-4M1 7l3-1 2-4 3 4 2 4 4-3" stroke="#18b82c" stroke-width="1.200"/><path d="M2 2l3 4 2-5 3 6 3 2" stroke="#333" stroke-dasharray="1 1"/>',
        loop: '<path d="M0 0h16v16H0z" fill="#c9c9c9" stroke="none"/><path d="M3 5h9q2 3 0 7H3M6 3L3 5l3 2M5 10v4" stroke="#18b82c" stroke-width="1.300"/>',
        pentLine: '<path d="' + pentPath + '" fill="#fafafa"/><path d="M1 9h14" stroke="#f03030"/>',
        pentDot: pent + '<circle cx="8" cy="10" r="1.200" fill="#321" stroke="none"/>', pentX: pent + badX, pent,
        pentGray: '<path d="' + pentPath + '" fill="#969696"/>',
        hexLines: '<path d="' + hexPath + '" fill="#fafafa"/><path d="M5 3l6 10M11 3L5 13M1 8h14" stroke="#f04545" stroke-width="1.500"/>',
        hexHandW: hex + '<path d="M7 10l2 1V6l1.500-1 .5 3 .5-4h1.500v4l1-3 1.500 1v6l-2 3.500h-4z" fill="#fff" stroke="#555" stroke-width=".7"/>',
        monitor: '<path d="M.5 .5h15v10H.5z" fill="#e8e8ee" stroke="#889"/><path d="M2 2h12v7H2z" fill="#3f66e0" stroke="none"/><path d="M4 14.500h8M8 10v4" stroke="#889"/><path d="M15 5l-7 8-2 2" stroke="#e09a1a" stroke-width="2.200"/>',
        hexMove: hex + '<path d="M11 6v9.500M6.500 11H16M9.500 8L11 6.500 12.500 8M9.500 14l1.500 1.500 1.500-1.500M8 9.500L6.500 11 8 12.500M14 9.500l1.500 1.500-1.500 1.500" stroke="#333" stroke-width="1.300"/>',
        hexMag: hex + badMag, hexHand: hex + badHand, hexX: hex + badX,
        hexGrayX: '<path d="' + hexPath + '" fill="#969696"/>' + badX,
        note: '<path d="M1.500 2.500h12v13h-12z" fill="#fdfdfd" stroke="#e3a53a" stroke-width="1.800"/><path d="M5 1h5v2.500H5z" fill="#5ec22c" stroke="none"/><path d="M4 7h6M4 10h5M4 13h7" stroke="#5ab0f0"/><path d="M15 2l-6 8" stroke="#24384a" stroke-width="2"/><path d="M15.500 1.500l-1.500 2" stroke="#f2622a" stroke-width="2"/>',
        word: '<path d="M0 0h16v16H0z" fill="#1f74f2" stroke="none"/><path d="M3 6q1-3 4-4l2-1 1 2 3 2-3 0-1 1H6l-2 1z" fill="#fff" stroke="none"/><text x="0.500" y="14" font-size="6.500" font-weight="bold" fill="#fff" stroke="none" font-family="Liberation Sans">Word</text>',
        bookmark: '<path d="M0 0h16v16H0z" fill="#1f74f2" stroke="none"/><path d="M4.500 3.500h9v10l-4.500-3-4.500 3z" stroke="#e5eefc" stroke-width="1.800"/><ellipse cx="4.500" cy="3" rx="4" ry="2.500" fill="#333" stroke="none"/>',
        excel: '<path d="M0 0h16v16H0z" fill="#08924a" stroke="none"/><path d="M3 6q1-3 4-4l2-1 1 2 3 2-3 0-1 1H6l-2 1z" fill="#fff" stroke="none"/><text x="0" y="14" font-size="6" font-weight="bold" fill="#fff" stroke="none" font-family="Liberation Sans">Excel</text>',
        check: '<circle cx="8" cy="8" r="7.800" fill="#5fbf08" stroke="none"/><path d="M1 11a7.800 7.800 0 0 0 14 0z" fill="#3f9204" stroke="none"/><path d="M4 8l3 3 5.500-5" stroke="#24500a" stroke-width="1.800"/>',
        omPen: omega(0, 7.5, 9, '#333') + redDot(3.5, 4) + '<path d="M14 7l-6.500 7" stroke="#f2622a" stroke-width="2.800"/>',
        omMove: '<path d="M4 0v7M.5 3.500h7" stroke="#222" stroke-width="1.400"/>' + omega(4, 14.5, 13, '#222') + redDot(9, 10),
        omGray: omega(1.5, 13, 16, '#8c8c8c') + '<circle cx="8" cy="7.500" r="1.200" fill="#888" stroke="none"/>',
        omX: '<path d="M1 1l4 4M5 1L1 5" stroke="#c81818" stroke-width="1.600"/>' + omega(4, 14.5, 13, '#222') + redDot(9, 10),
        togG: '<path d="M1 1.500v3h14v-3M4 3v1M7 2v2M10 3v1M13 2v2" /><rect x="1" y="9" width="14" height="5" rx="2.500" fill="#0a9a4c" stroke="none"/><circle cx="12" cy="11.500" r="1.800" fill="#fff" stroke="none"/>',
        togR: '<path d="M1 1.500v3h14v-3M4 3v1M7 2v2M10 3v1M13 2v2" /><rect x="1" y="9" width="14" height="5" rx="2.500" fill="#ee1c24" stroke="none"/><circle cx="4" cy="11.500" r="1.800" fill="#fff" stroke="none"/>',
        frameOm: '<path d="M1.500 1v14h13V1z" fill="#eef4fa" stroke="#4a94cc" stroke-width="1.300"/>' + omega(3.5, 12, 11, '#222'),
        gridDot: '<path d="M1.500 1.500h13v13h-13zM5.800 1.500v13M10.200 1.500v13M1.500 5.800h13M1.500 10.200h13"/><path d="M6 6h4v4H6z" fill="#2a9a5c" stroke="none"/>',
        slopeOm: '<path d="M.5 7v8h14V1z" fill="#f4f8fc" stroke="#4a94cc"/>' + omega(5, 14, 8, '#333'),
        slopeL: '<path d="M1 6l4-3 9-1.500v13M5 3v5M1 3l4-2"/><path d="M1 8h6v3H1zM1 13h6v2H1z" fill="#9fd0f2" stroke="#134"/><path d="M8 10V6M11 10V5M7 9h5" stroke="#2a2"/>',
        slopeRed: '<path d="M.5 .5h15v15H.5z" fill="#fff" stroke="#f06060"/><path d="M2 7.500l11-5v11H2z" stroke="#222"/><path d="M7 12V7M10 12V6M6 11h6" stroke="#58b858"/>',
        slopeGray: '<path d="M.5 .5h15v15H.5z" fill="#f4f4f4" stroke="#c0c0c0"/><path d="M2 7.500l11-5v11H2zM7 12V7M10 12V6M6 11h6" stroke="#b8b8b8"/>',
        hash: '<path d="M1.500 1.500h13v13h-13z" fill="#eee" stroke="#777" stroke-width="1.800"/><path d="M6.500 4.500v7M9.500 4.500v7M4.500 6.500h7M4.500 9.500h7" stroke="#18a050" stroke-width="1.200"/>',
        mid: '<path d="M0 8L6 1M5 8l6-7M10 8l6-7"/><path d="M3 8L9 1" stroke="#e33"/><path d="M0 9h16v7H0z" fill="#333" stroke="none"/><text x="1.500" y="15" font-size="6.500" font-weight="bold" fill="#fff" stroke="none" font-family="Liberation Sans">MID</text>',
        poly: '<path d="M2 6V3h9q3 3 0 5H7M1 10v3h4"/><path d="M15 8l-6 7" stroke="#e22"/>' + node(9, 3),
        penXY: '<path d="M0 0h16v16H0z" fill="#d4d4d4" stroke="none"/><path d="M0 8l6-7M3 12L8 5" stroke="#e22"/><path d="M14 1L4 12" stroke="#d89a2a" stroke-width="2.500"/><text x="7" y="15.500" font-size="6.500" font-weight="bold" fill="#111" stroke="none" font-family="Liberation Sans">X.Y</text>',
        listY: '<path d="M0 7l5-6M3 10l5-7" stroke="#e22"/><path d="M6 6h9.500v9.500H6z" fill="#f8d048" stroke="#c99a18"/><path d="M7 9h7M7 11h7M7 13h7" stroke="#c99a18"/>',
        cross: '<path d="M6 1h9M1 1v3h4M4 2l2 2-2 2"/><path d="M1 7h14" stroke="#e22" stroke-width="1.400"/><path d="M8 5v5"/><path d="M6 11v4M10 11v4" stroke="#11c" stroke-width="1.500"/>',
        tableI: '<path d="M.5 1.500h14v12H.500zM3 4h3v3H3zM8 4h4v3H8zM3 9h3v3H3z"/><path d="M8.500 9.500h7v6h-7z" fill="#fff" stroke="#334"/><path d="M10 12h4M10 14h4"/>',
        mmo1: mmo('<path d="M8 1l6 6M14 1L8 7" stroke="#f22" stroke-width="2"/>'),
        mmo2: mmo('<circle cx="11.500" cy="4.500" r="2.500" stroke="#f44" stroke-width="1.500"/>'),
        mmo3: mmo('<path d="M8 4h7" stroke="#c22" stroke-width="2"/>'),
        mmo4: mmo('<path d="M9 1l5 6M14 1L9 7" stroke="#c11" stroke-width="1.800"/>'),
        waves: '<path d="M0 4q4-5 7 0t8 0M0 9q4-5 7 0t8 0M2 14q3-4 6 0t7 0" stroke="#2a5fe0" stroke-width="1.400"/><path d="M4 15V7M2 9l2-2 2 2" stroke="#222"/>',
        vAdd: '<path d="M3 0v6M0 3h6" stroke="#e11" stroke-width="1.500"/><path d="M5 6l3 3M3 14h7M11 6h3v6"/>' + node(10, 6) + node(11, 14, '#e11'),
        vDel: '<path d="M0 3h6" stroke="#e11" stroke-width="1.500"/><path d="M5 6l3 3M3 14h9q3-3 1-7"/>' + node(12, 7) + node(3, 14),
        d2d3: '<text x="0" y="9" font-size="7" font-weight="bold" fill="#111" stroke="none" font-family="Liberation Sans">2D</text><text x="0" y="16" font-size="7" font-weight="bold" fill="#111" stroke="none" font-family="Liberation Sans">3D</text><path d="M5 2q8 0 10 12" stroke="#11c"/><path d="M9 12h4"/>' + node(5, 2, '#11c'),
        curve: '<path d="M1 10q0-8 6-7t7-2M4 7v4h4"/><path d="M15 5l-7 9" stroke="#11c"/>' + node(8, 14, '#11c') + node(14, 6),
        arcN: '<path d="M1 15q2-12 13-13M6 9h5"/><path d="M7 8h6v6H7z" stroke="#11c"/>' + node(14, 2) + node(2, 14),
        peak: '<path d="M1 13Q4 3 8 2q4 1 6 11" stroke="#11c"/><path d="M8 15V7M6 9l2-2 2 2"/>' + node(8, 2, '#e11') + node(1.500, 13, '#11c') + node(14, 13, '#11c'),
        zig: '<path d="M1 10l5-4M10 11l4 4"/><path d="M8 1v7l3 3" stroke="#e11" stroke-width="1.400"/>' + node(2, 10) + node(14, 14),
        back: '<path d="M1 4h9M4 1L1 4l3 3" stroke="#c22"/><path d="M3 14h9q4-4 0-9"/>' + node(3, 14),
        xnode: '<path d="M2 2l5 5M14 2L9 7M2 14l5-5M14 14L9 9"/><path d="M6 6h4v4H6z" stroke="#e11" stroke-dasharray="1 1" stroke-width="1.500"/>' + node(2, 2) + node(14, 2) + node(2, 14) + node(14, 14),
        layBulb: '<path d="M4 1h9l-3 3H1zM1 8h8M1 12h8M1 8l3-2M1 12l3-2"/><circle cx="13" cy="9" r="2.500" fill="#ffd23a" stroke="#e08a1a"/><path d="M13 12v4"/>',
        layUpB: '<path d="M3 9V1M1 3.500L3 1l2 2.500" stroke="#0b6fc4" stroke-width="2"/>' + sheet(9, '#fff', '#555'),
        layDownB: sheet(1, '#fff', '#555') + '<path d="M12 7v8M10 12.500l2 2.500 2-2.500" stroke="#0b6fc4" stroke-width="2"/>',
        layLamp: sheet(2, '#fff', '#888') + '<circle cx="12" cy="9" r="2.500" fill="#cfe8fb" stroke="#69c"/><path d="M12 12v4"/>',
        layD: '<path d="M5 1h9l-3 4H2zM2 8h9l3-4"/><path d="M2 12h9l3-4" stroke="#0b6fc4" stroke-width="1.600"/><path d="M14 12l-4 3M10 12v3h3" stroke="#000"/>',
        layX: sheet(2, '#fff', '#888') + '<path d="M8 8l6 7M14 8l-6 7" stroke="#d01818" stroke-width="2"/>',
        layUpG: '<path d="M8 8V1M6.500 3L8 1l1.500 2" stroke="#38b058" stroke-width="1.300"/>' + sheet(9, '#fff', '#aaa'),
        layDownG: sheet(1, '#fff', '#aaa') + '<path d="M8 7v7M6.500 12L8 14l1.500-2" stroke="#38b058" stroke-width="1.300"/>',
        penCloud: '<path d="M2 13q-2-3 2-4l6-4q5 0 5 4t-2 4z" fill="#fff"/><path d="M10 2L3 9" stroke="#e09a3a" stroke-width="2.400"/>',
        penCheck: '<path d="M1 3l7 11 7-8-3-3-4 2-3-2z" fill="#fff"/><path d="M14 2L7 9" stroke="#e09a3a" stroke-width="2.200"/>',
        cube: '<path d="M8 1l6 3.500v7L8 15l-6-3.500v-7zM8 1v7M2 12l6-4 6 4"/><path d="M7 1h3v3H7z" fill="#1a6fc4" stroke="none"/><path d="M1 10h3v3H1z" fill="#2a8a2a" stroke="none"/><path d="M12 10h3v3h-3z" fill="#b22" stroke="none"/>',
        clip: '<path d="M1.500 3.500h12v11h-12z" fill="#9aa0a6"/><path d="M5 1.500h5v4H5z" fill="#fff"/><path d="M10 11h5v5h-5zM11 7h3v3h-3z" fill="#333"/>',
        brush: '<path d="M2 1l8 9" stroke="#a05a4a" stroke-width="2.500"/><path d="M4 10h8l3 4H1z" fill="#9fcdef" stroke="#0b6fc4"/><path d="M11 4l4 9" />',
        curAdd: '<path d="M3.500 0v7M0 3.500h7" stroke="#13558f" stroke-width="1.800"/><path d="M8 5l6 7-3 0 1 3-2 0-1-3-1 2z" fill="#fff3a0"/>',
        curBack: '<path d="M1 7q0-6 4-6t4 4M1 7l-1-3M1 7l3-2" stroke="#13406f" stroke-width="1.800"/><path d="M8 5l6 7-3 0 1 3-2 0-1-3-1 2z" fill="#fff3a0"/>',
        scaleBar: '<path d="M2 1h12M2 7.500h12" stroke="#2aa070" stroke-width="1.200"/><path d="M4.500 2.500v4M7.500 3v1M7.500 5v1M9.500 6.500v-4M11.500 6.500v-4" stroke="#2a8a5a"/><path d="M.5 10.500h15v4H.500z" fill="#e4e4e4"/><path d="M3 11v2M5 11v2M7 11v2M9 11v2M11 11v2M13 11v2"/>',
        mount: '<path d="M0 0h16v16H0z" fill="#8fd0f0" stroke="none"/><path d="M0 16V12l5-6 4 4 3-2 4 5v3z" fill="#76b060" stroke="none"/><circle cx="3.500" cy="3.500" r="1.800" fill="#444" stroke="none"/><circle cx="11.500" cy="11" r="2" fill="#3c5a34" stroke="none"/><circle cx="14" cy="4" r="1.300" fill="#f8e08a" stroke="none"/>',

        snapDots: '<path d="M1 3h14M1 6h14M1 9h14M1 12h11M14 2v12" stroke-dasharray="1 2" stroke="#222"/>',
        gridI: '<path d="M1.500 1.500h13v13h-13zM4.500 1.500v13M8 1.500v13M11.500 1.500v13M1.500 4.500h13M1.500 8h13M1.500 11.500h13" fill="#fff" stroke="#222"/>',
        ortho: '<path d="M2 1v13h13M2 9h5v5" stroke="#555"/>',
        polar: '<circle cx="7" cy="9" r="5"/><path d="M14 2L5 11h8M13 6v7" stroke="#222"/>',
        osnap: '<path d="M3.500 3.500h11v11h-11z" fill="#fff"/><circle cx="3" cy="3" r="2" stroke="#e25a1c" stroke-width="1.300"/>',
        osnap3: '<path d="M4 4l3-2.500h7V10l-3 3H4z" fill="#fff"/><circle cx="3" cy="13" r="2" stroke="#e25a1c" stroke-width="1.300"/>',
        otrack: '<path d="M12 2L3 13h11" stroke="#222" stroke-width="1.400"/>',
        ducs: '<path d="M2 1v13h13M2 14L12 4" stroke="#234"/><path d="M12 1l-3 5h3l-2 5 5-6h-3l2-4z" fill="#ffb020" stroke="#d08010" stroke-width=".6"/>',
        dyn: '<path d="M5 2v9M1 6.500h8M8.500 8.500h6v5h-6z" stroke="#222" stroke-width="1.400"/>',
        lwt: '<path d="M8 1v14" stroke="#111"/><path d="M1 8h14" stroke="#111" stroke-width="2"/>',
        tpy: '<path d="M1.500 1.500h13v13h-13z" fill="#cfe6f8" stroke="#1a6fc4"/><path d="M3 4h2M7 4h2M11 4h2M5 6h2M9 6h2M3 8h2M7 8h2M11 8h2M5 10h2M9 10h2M3 12h2M7 12h2M11 12h2" stroke="#7ab0e0" stroke-width="2"/>',
        qp: '<path d="M4.500 2.500h7v11h-7z" fill="#fff" stroke="#222"/><path d="M6 5h1M9 5h1M6 8h1M9 8h1M6 11h1M9 11h1" stroke="#222" stroke-width="1.500"/>',
        sc: '<path d="M1 3h6M4 0v6M5 5h6v6" stroke="#222"/><path d="M8.500 8.500h6v6h-6z" fill="#7cc46a" stroke="#285"/>',
        am: '<path d="M6 1.500h4V6h4.500v4H10v4.500H6V10H1.500V6H6z" fill="#fff"/>',
        paper: '<path d="M2.500 1.500h11v11h-11z" fill="#fff" stroke="#222"/><path d="M5 3v7h5zM1 15h14" stroke="#222"/>',
        views: '<path d="M1.500 1.500h6v8h-6zM8.500 1.500h6v8h-6z" fill="#fff" stroke="#222"/><path d="M1 13h14" stroke="#222" stroke-width="2.400"/>',
        anno: aMark('#222'),
        annoSun: aMark('#222') + '<circle cx="12" cy="8" r="3" fill="#ffb020" stroke="#fff"/>',
        annoGray: aMark('#777'),
        gear: '<circle cx="8" cy="8" r="5" fill="#fff" stroke="#333" stroke-width="2.500" stroke-dasharray="2.500 1.400"/><circle cx="8" cy="8" r="2"/>',
        lockOpen: '<path d="M1.500 7.500h9v7h-9z" fill="#fff" stroke="#222"/><path d="M9 7V4q0-2.500 2.500-2.500T14 4v3M6 9.500v3" stroke="#222"/>',
        gauge: '<circle cx="8" cy="8" r="6.500" fill="#7c828c" stroke="#999"/><path d="M8 8L5 5" stroke="#fff" stroke-width="2"/>',
        screen: '<path d="M1.500 1.500h13v13h-13z" fill="#fff" stroke="#456"/><path d="M2 3h12" stroke="#89a" stroke-width="2"/>',
      };

      const svg = (name, size = "size-4") =>
        `<svg class="${size} shrink-0" viewBox="0 0 16 16" fill="none" stroke="#3a4148">${icons[name] || ""}</svg>`;
      const grip = '<span class="flex h-full w-1.5 justify-center self-stretch bg-[#5c5c5c] pt-1"><svg class="h-3.5 w-1" viewBox="0 0 4 14"><path d="M.5 0v14M3 0v14" stroke="#111" stroke-dasharray="1 1" /></svg></span>';
      const sep = '<span class="flex h-full w-1.5 shrink-0 justify-center py-0.5"><span class="h-full w-px bg-[#333]"></span></span>';

      // ---- toolbars: "|" is a separator, "^" a small drop-down arrow ----
      const rows = [
        [
          "new open save | print preview publish | cut copy paste match blocked | undo ^ redo ^ | pan zoomWin zoomExt zoom zoomPrev | props",
          "erase copyObj mirror offset array move rotate scale stretch trim extend brk1 brk2 chamfer fillet explode",
          "dist area slopeR locate | match quick",
          "snap circUndo sqUndo pentUndo rotBox dimLine hexUndo",
        ],
        [
          "north xy pic picPlus layerSwap shp",
          "界 乡 村 组 户 岛 地 |",
          "circSlash circDots circHand circX circMag circ circGray",
          "nodeD sqSlash sqDots sqHand sqX sqMag sq sqGray",
          "fence loop pentLine pentDot pentX pent pentGray",
          "hexLines hexHandW monitor hexMove hexMag hexHand hexX hexGrayX",
          "note word bookmark excel check",
          "omPen omMove omGray omX | togG togR",
          "frameOm gridDot slopeOm slopeL hash",
          "mid poly | penXY listY cross tableI mmo1 mmo2 mmo3 mmo4",
          "waves vAdd vDel d2d3 curve arcN peak zig back xnode",
          "layerSwap layBulb | layUpB layDownB layLamp layD layX",
          "penCloud penCheck | cube clip brush | curAdd curBack",
        ],
      ];
      const cell = (k) => {
        if (k === "|") return sep;
        if (k === "^") return '<button class="flex w-[13px] items-center justify-center" aria-label="更多"><svg class="h-1 w-1.5" viewBox="0 0 6 4"><path d="M0 0h6L3 4z" fill="#888"/></svg></button>';
        const body = icons[k] ? svg(k) : k;
        return `<button class="flex w-[23px] items-center justify-center text-base leading-4 text-[#f00]" aria-label="${k}">${body}</button>`;
      };
      document.querySelectorAll("[data-row]").forEach((row) => {
        row.innerHTML = rows[row.dataset.row]
          .map((bar) => `<div class="flex h-6 shrink-0 border border-[#333] bg-[#ebebeb]">${grip}${bar.split(" ").map(cell).join("")}</div>`)
          .join("");
      });

      document.querySelectorAll("[data-icon]").forEach((el) => (el.innerHTML = svg(el.dataset.icon)));
      document.querySelectorAll("[data-grip]").forEach((el) => (el.outerHTML = grip));
      document.querySelectorAll("[data-sep]").forEach((el) => (el.outerHTML = sep));
      document.querySelectorAll("[data-dots]").forEach((el) => (el.outerHTML = '<svg class="h-3 w-1" viewBox="0 0 4 12"><path d="M.5 0v12M3 0v12" stroke="#222" stroke-dasharray="1 1" /></svg>'));
      document.querySelectorAll("[data-chev]").forEach((el) => (el.outerHTML = '<svg class="pointer-events-none absolute top-2 right-1.5 h-2 w-3" viewBox="0 0 12 8" fill="none" stroke="#aaa"><path d="M1 1l5 5 5-5" /></svg>'));

      // ---- menu ----
      const menu = ["文件(F)", "工具(T)", "显示(V)", "编辑(B)", "数据处理(N)", "地物编辑(W)", "系统接口(G)", "勘测定界(S)", "线状工程(X)", "项目输出(E)", "图幅整饰(T)", "检查验收(C)", "地籍应用(D)", "房产(J)", "帮助(H)"];
      document.getElementById("menu").innerHTML = menu.map((m) => `<button class="leading-6">${m}</button>`).join("");

      // ---- property table, "#" marks a group row ----
      const props = ["#编号信息", "序号", "地块编号", "地块号", "#权属信息", "地/市", "县区/企业", "乡镇", "村", "组", "所在乡镇", "所在村社", "所有权", "#地类信息", "地类代码", "所占年份", "基本农用:是", "农用地转用:否", "图斑编号:0", "面积:0", "平差面积:0", "#其他", "用地类型:征收", "标注方式", "用地功能", "用地分区", "坡度分级", "田坎系数"];
      document.getElementById("props").innerHTML = props
        .map((p) => {
          if (p[0] === "#") return `<tr class="bg-[#d4d0c8]"><td></td><th colspan="2" class="p-0 text-left font-normal"><div class="h-[18px] overflow-hidden pt-1.5 pl-[3px]">${p.slice(1)}</div></th></tr>`;
          const [name, value = ""] = p.split(":");
          const sel = name === "序号" ? "bg-[#b2b2b2]" : "bg-white";
          return `<tr><td class="bg-[#d4d0c8]"></td><th class="border-r-2 border-[#e3e3e3] p-0 text-left font-normal"><div class="h-[18px] overflow-hidden border-b border-[#e3e3e3] pt-1.5 pl-[3px] ${sel}">${name}</div></th><td class="p-0"><div class="h-[18px] border-b border-[#e3e3e3] pt-1.5 pl-[3px]">${value}</div></td></tr>`;
        })
        .join("");

      // ---- tool palette ----
      const groups = [
        ["基础工具", "scaleBar xy layerSwap pic mount layUpG layDownG"],
        ["清绘界线", "界 乡 村 组 地 岛 户"],
        ["清绘权属", "circSlash circDots circHand circX circMag circ circGray"],
        ["清绘地类", "nodeD sqSlash sqDots sqHand sqX *sqMag sq sqGray"],
        ["地块处理", "hexLines hexHandW monitor hexMove hexMag hexX hexGrayX"],
        ["点号菜单", "omPen omMove omGray omX togG togR"],
        ["项目报告", "note word bookmark excel check"],
        ["图幅整饰", "frameOm gridDot slopeRed slopeGray hash"],
      ];
      document.getElementById("palette").innerHTML = groups
        .map(([title, list]) => {
          const items = list
            .split(" ")
            .map((k) => {
              const on = k[0] === "*" ? "outline-6 outline-white shadow-[-7px_-7px_0_#aaa]" : "";
              const key = k.replace("*", "");
              return `<button class="size-6 text-[21px] leading-[22px] text-[#f00] ${on}" aria-label="${key}">${icons[key] ? svg(key, "size-6") : key}</button>`;
            })
            .join("");
          return `<section><h3 class="flex h-7 items-center gap-1.5 bg-[#a0a0a0] pl-1.5 text-[17px] font-bold text-white"><svg class="h-3.5 w-3.5" viewBox="0 0 14 14"><path d="M.5 .5h13v13H.5zM3 7h8" fill="#f0f0f0" stroke="#000"/></svg>${title}</h3><div class="grid grid-cols-[repeat(4,24px)] content-start gap-3 px-[5px] pt-[11px] h-[81px]">${items}</div></section>`;
        })
        .join("");

      // ---- status bar toggles, "+" is switched on ----
      const modes = "snap snapDots +gridI ortho +polar +osnap osnap3 +otrack +ducs +dyn lwt +tpy qp sc am";
      document.getElementById("modes").innerHTML = modes
        .split(" ")
        .map((k) => {
          const on = k[0] === "+" ? "bg-linear-to-b from-[#d5eff6] to-[#93cbdb]" : "bg-linear-to-b from-[#c4c4c4] to-[#9c9c9c]";
          return `<button class="flex w-[22px] items-center justify-center border-r border-[#666] ${on}" aria-label="${k.replace("+", "")}">${svg(k.replace("+", ""))}</button>`;
        })
        .join("");
      const arrows = ["M6 6v12M15 6v12l-7-6z", "M15 6v12l-7-6z", "M8 6v12l7-6z", "M16 6v12M7 6v12l7-6z"];
      document.getElementById("pager").innerHTML = arrows
        .map((d) => `<button class="w-[22px] border-r border-[#999]" aria-label="切换"><svg class="h-[22px] w-[21px]" viewBox="0 0 22 24"><path d="${d}" fill="#666" stroke="#666"/></svg></button>`)
        .join("");

      // ---- dialog rows ----
      const field = (id, width, value) => `<input id="${id}" value="${value}" class="h-[26px] ${width} border border-white border-t-[#a0a0a0] border-l-[#a0a0a0] bg-white px-0.5 pb-0.5 outline-none" />`;
      document.getElementById("coords").innerHTML = [["交点点号", ""], ["坐标&nbsp; X", "0"], ["坐标&nbsp; Y", "0"], ["半径&nbsp; R", "0"]]
        .map(([label, value], i) => `<div class="flex items-center"><label for="pt${i}" class="w-[83px] pt-1">${label}</label>${field("pt" + i, "w-[122px]", value)}</div>`)
        .join("");
      const pair = (label, id) => `<div class="flex h-[26px] items-center"><label for="${id}a" class="w-[88px] pt-1">${label}</label>${field(id + "a", "w-[50px]", "0")}<label for="${id}b" class="w-[22px] text-center">+</label>${field(id + "b", "w-[75px]", "0")}</div>`;
      document.getElementById("stakes").innerHTML = pair("起点桩号K", "s1") + pair("终点桩号K", "s2");
      document.getElementById("chains").innerHTML = pair("来向里程K", "k1") + pair("去向里程K", "k2");

      const blank = (cols, rows) => Array(rows).fill(`<tr class="h-[23px]">${'<td class="border-r border-b border-[#ececec]"></td>'.repeat(cols)}</tr>`).join("");
      document.getElementById("points").innerHTML =
        '<colgroup><col class="w-[45px]"/><col class="w-[90px]"/><col class="w-[90px]"/><col class="w-[67px]"/><col class="w-[67px]"/><col class="w-[67px]"/><col class="w-[67px]"/><col/></colgroup>' +
        `<thead><tr class="h-[26px]">${["点号", "坐标X", "坐标Y", "半径", "参数1", "长度1", "参数2", "长度2"].map((h) => `<th class="border-r border-[#e0e0e0] p-0 font-normal whitespace-nowrap last:border-r-0 last:pr-1 last:text-right">${h}</th>`).join("")}</tr></thead><tbody>${blank(8, 8)}</tbody>`;
      document.getElementById("miles").innerHTML =
        '<colgroup><col class="w-[122px]"/><col/></colgroup>' +
        `<thead><tr class="h-[26px]">${["来向里程", "去向里程"].map((h) => `<th class="border-r border-[#e0e0e0] p-0 pl-[5px] text-left font-normal">${h}</th>`).join("")}</tr></thead><tbody>${blank(2, 5)}</tbody>`;

      // ---- left edge blocks ----
      document.getElementById("edge").innerHTML = '<div class="h-[155px] shrink-0 rounded-r-lg bg-[#3f7fff]"></div><div class="h-[22px] shrink-0"></div>' +
        '<div class="mb-[10px] h-[155px] shrink-0 rounded-r-lg border-t-[27px] border-[#376fdc] bg-[#3f7fff]"></div>'.repeat(8);

      // ---- model space grid ----
      const canvas = document.getElementById("canvas");
      const w = canvas.clientWidth;
      const h = canvas.clientHeight;
      const step = 131.73 / 5;
      let minor = "";
      let major = "";
      for (let i = -3; 103 + i * step < w; i++) {
        const x = Math.round(103 + i * step) + 0.5;
        if (i % 5) minor += `M${x} 0V${h}`;
        else major += `M${x} 0V${h}`;
      }
      for (let i = -2; 54 + i * step < h; i++) {
        const y = Math.round(54 + i * step) + 0.5;
        if (i % 5) minor += `M0 ${y}H${w}`;
        else major += `M0 ${y}H${w}`;
      }
      document.getElementById("grid").innerHTML = `<path d="${minor}" stroke="#262d38"/><path d="${major}" stroke="#2f3848"/><path d="M0 ${h - 56.5}H${w}" stroke="#6b2a30"/>`;
    </script>
  </body>
</html>
